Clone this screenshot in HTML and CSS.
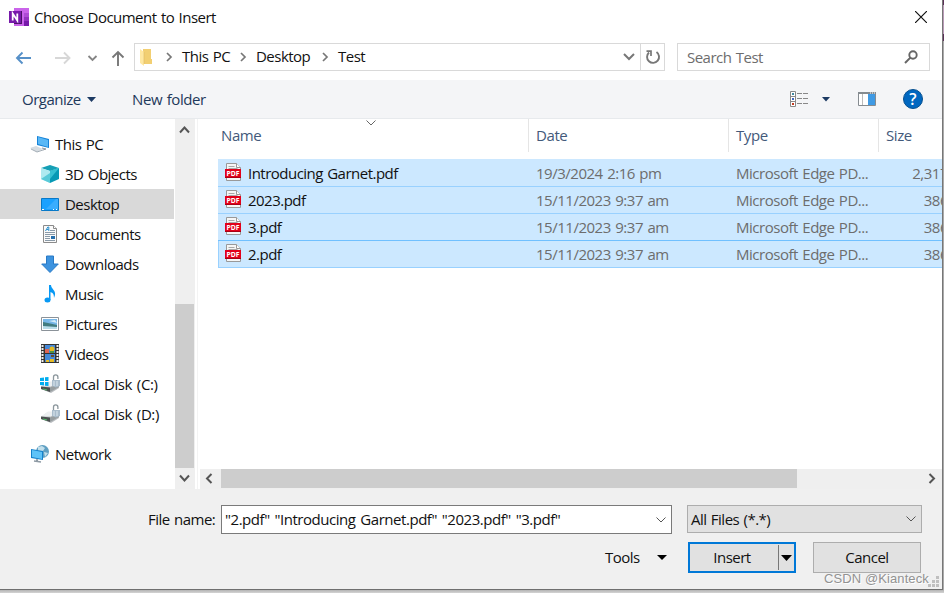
FILE: index.html
```html
<!DOCTYPE html>
<html lang="en">
<head>
<meta charset="utf-8">
<title>Choose Document to Insert</title>
<link rel="stylesheet" href="styles.css">
</head>
<body>
<svg class="defs" width="0" height="0">
  <defs>
    <g id="pdf">
      <path d="M1.5.5h10l4 4v13h-14z" fill="#f6f6f6" stroke="#999"/>
      <path d="M11.500.5v4h4" fill="#fff" stroke="#999"/>
      <path d="M3.500 3.500h6M3.500 5.500h9" stroke="#aaa"/>
      <path d="M0 6h16v9H0z" fill="#e2001a"/>
      <path d="M0 14h16v1H0z" fill="#a80014"/>
      <text x="8" y="13" text-anchor="middle" class="pdf-label">PDF</text>
    </g>
    <g id="drive">
      <path d="M1 13l7-5h9l2 3v3l-8 5-10-4z" fill="#b9bdc0"/>
      <path d="M1 12.500l7-5h10l-7 5z" fill="#edf0f1"/>
      <path d="M1 12.500l9 1v4.500l-9-3z" fill="#4b5050"/>
      <path d="M10 13.500l9-4v3.500l-9 5z" fill="#979d9f"/>
      <path d="M3 15l4 1" stroke="#54b96a" stroke-width="1.200"/>
      <path d="M13.500 6V3a2.200 2.200 0 0 1 4.400 0V5" fill="none" stroke="#8c979d" stroke-width="1.300"/>
      <path d="M12 6h8v6l-4 1.500-4-1.500z" fill="#a9bccb"/>
      <path d="M14 7v5M17 7v5" stroke="#dce8f0"/>
    </g>
  </defs>
</svg>
<div class="desktop">
<div class="dialog">
  <header class="title-bar">
    <svg width="20" height="18" viewBox="0 0 20 18">
      <path d="M5 0h15v18H5z" fill="#ca64ea"/><path d="M15 5h5v4h-5z" fill="#ae4bd5"/><path d="M15 9h5v4h-5z" fill="#9332bf"/><path d="M15 13h5v5h-5z" fill="#7719aa"/>
      <path d="M5 3h8v13H5z" fill="#4c1268"/><path d="M0 3h12v12H0z" fill="#7719aa"/>
      <path d="M3.700 12.500v-7l4.600 7v-7" fill="none" stroke="#fff" stroke-width="1.800"/>
    </svg>
    <h1 class="title">Choose Document to Insert</h1>
    <svg class="close" width="12" height="12" viewBox="0 0 12 12"><path d="M0 0l12 12M12 0L0 12" stroke="#111" stroke-width="1.200"/></svg>
  </header>

  <nav class="nav-bar">
    <svg class="nav-icons" width="118" height="28" viewBox="0 0 118 28" fill="none">
      <path d="M3 15h14M8.500 9.500L3 15l5.500 5.500" stroke="#5690c8" stroke-width="1.900"/>
      <path d="M41 15h14.500M50 9.500l5.500 5.500-5.500 5.500" stroke="#d7d7d7" stroke-width="1.900"/>
      <path d="M74.500 13l4 4 4-4" stroke="#858585" stroke-width="1.800"/>
      <path d="M104 23V9M98.500 14.500L104 9l5.500 5.500" stroke="#777" stroke-width="1.900"/>
    </svg>
    <div class="address">
      <svg class="folder" width="13" height="18" viewBox="0 0 13 18"><path d="M3 1h8v10h1v5H3z" fill="#f2cf72"/><path d="M0 1l4 3v14l-4-3z" fill="#ffe8a2"/><path d="M4 4v12" stroke="#dcb961" stroke-width=".6"/></svg>
      <svg class="crumb-arrow" width="7" height="10" viewBox="0 0 7 10"><path d="M1 1l4 4-4 4"/></svg>
      <span class="crumb crumb-pc">This PC</span>
      <svg class="crumb-arrow" width="7" height="10" viewBox="0 0 7 10"><path d="M1 1l4 4-4 4"/></svg>
      <span class="crumb crumb-desktop">Desktop</span>
      <svg class="crumb-arrow" width="7" height="10" viewBox="0 0 7 10"><path d="M1 1l4 4-4 4"/></svg>
      <span class="crumb">Test</span>
      <svg class="address-drop" width="12" height="8" viewBox="0 0 12 8"><path d="M1 1l5 5 5-5" fill="none" stroke="#777" stroke-width="2"/></svg>
      <span class="refresh"><svg width="16" height="16" viewBox="0 0 16 16"><path d="M11.500 3A6 6 0 1 1 4 3.500" fill="none" stroke="#777" stroke-width="1.900"/><path d="M1.500 2.200H6V7" fill="none" stroke="#777" stroke-width="1.700"/></svg></span>
    </div>
    <div class="search"><span>Search Test</span><svg width="14" height="14" viewBox="0 0 14 14"><circle cx="9" cy="5" r="3.700" fill="none" stroke="#666" stroke-width="1.900"/><path d="M6.400 7.600L1 13" stroke="#666" stroke-width="2"/></svg></div>
  </nav>

  <div class="toolbar">
    <span class="organize">Organize</span>
    <svg class="tri" width="9" height="5" viewBox="0 0 9 5"><path d="M0 0h9L4.500 5z" fill="#1c3a63"/></svg>
    <span class="new-folder">New folder</span>
    <svg class="view-icon" width="18" height="16" viewBox="0 0 18 16"><path d="M.5.5h5v15h-5zM.5 5.500h5M.5 10.500h5" fill="#fff" stroke="#888"/><path d="M2 2h2v2H2z" fill="#4088a0"/><path d="M2 7h2v2H2z" fill="#4268c0"/><path d="M2 12h2v2H2z" fill="#c33c21"/><path d="M7 2.500h5M13 2.500h5M7 7.500h5M13 7.500h5M7 12.500h5M13 12.500h5" stroke="#888"/></svg>
    <svg class="view-tri" width="8" height="5" viewBox="0 0 8 5"><path d="M0 0h8L4 4.500z" fill="#1c3a63"/></svg>
    <svg class="pane-icon" width="18" height="14" viewBox="0 0 18 14"><path d="M.5.5h17v13H.5z" fill="#fff" stroke="#858b90"/><path d="M0 0h18v2H0z" fill="#858b90"/><path d="M4.500 2v11" stroke="#bbb"/><path d="M10 2h7v11h-7z" fill="#3f9ae4"/><path d="M12 1h1M14 1h1M16 1h1" stroke="#fff"/></svg>
    <span class="help">?</span>
  </div>

  <main class="browser">
    <div class="tree">
      <div class="node root"><svg width="20" height="20" viewBox="0 0 20 20"><path d="M7 2l12 3v9L7 11z" fill="#1683d8"/><path d="M8 3l10 3v7L8 10z" fill="#59b8f6"/><path d="M0 14l6-2 7 3-6 3z" fill="#d6dce1"/><path d="M1 15l6 3 6-2" fill="none" stroke="#a3adb6"/><path d="M12 14l4 1-3 1" fill="none" stroke="#8e98a0"/></svg><span>This PC</span></div>
      <div class="node"><svg width="20" height="20" viewBox="0 0 20 20"><path d="M1 4l9-3 9 3-9 3z" fill="#159fb5"/><path d="M1 4l9 3v12l-9-4z" fill="#aeeaf0"/><path d="M10 7l9-3v11l-9 4z" fill="#0799b5"/><path d="M10 7l9-3-9 11z" fill="#35c0d2"/><path d="M1 15l9-6v10z" fill="#59cad8"/></svg><span>3D Objects</span></div>
      <div class="node selected"><svg width="20" height="20" viewBox="0 0 20 20"><path d="M1.500 4.500h17v12h-17z" fill="#1ba1ff" stroke="#0879c8"/><path d="M6 15L16 5h2v10z" fill="#39adff"/><path d="M2 15.500h2M13 15.500h1M16 15.500h1" stroke="#fff"/></svg><span>Desktop</span></div>
      <div class="node"><svg width="20" height="20" viewBox="0 0 20 20"><path d="M3.500 1.500h10l3 3v14h-13z" fill="#fafafa" stroke="#8b8b8b"/><path d="M13.500 1.500v3h3" fill="#fff" stroke="#8b8b8b"/><path d="M10 6.500h5M5 8.500h10M5 10.500h10M5 12.500h5M5 14.500h5M5 16.500h10" stroke="#8a9aa8"/><path d="M5.500 7l2.300-4h1v4M6.500 5.500h2" fill="none" stroke="#2c91ce"/><path d="M11 12h4v3h-4z" fill="#276fac"/></svg><span>Documents</span></div>
      <div class="node"><svg width="20" height="20" viewBox="0 0 20 20"><path d="M6.500 2h7v8h4.800L10 18.500 1.700 10h4.800z" fill="#3d93df" stroke="#2879c5"/></svg><span>Downloads</span></div>
      <div class="node"><svg width="20" height="20" viewBox="0 0 20 20"><ellipse cx="7.500" cy="16" rx="3" ry="2.500" fill="#0899f4"/><path d="M9 1h2c0 4 5 5 4 10l-1 3c0-4-1-5-3.500-6v8H9z" fill="#0899f4"/></svg><span>Music</span></div>
      <div class="node"><svg width="20" height="20" viewBox="0 0 20 20"><path d="M1.500 3.500h17v13h-17z" fill="#fff" stroke="#8b9299"/><path d="M3 5h14v10H3z" fill="#77b7e8"/><path d="M3 8l5 1 9 2v4H3z" fill="#427c80"/><path d="M9 7l6-1 2 3z" fill="#d5edfa"/><path d="M3 12l14 1v2H3z" fill="#b8dce9"/></svg><span>Pictures</span></div>
      <div class="node"><svg width="20" height="20" viewBox="0 0 20 20"><path d="M1 0h18v19H1z" fill="#343434"/><path d="M5 1h10v8H5zM5 10h10v8H5z" fill="#4489d9"/><path d="M2.500 1v17M17.500 1v17" stroke="#eee" stroke-width="2" stroke-dasharray="2 1"/><circle cx="12" cy="5" r="2.500" fill="#e5ba21"/><path d="M5 5h4v4H5z" fill="#df6655"/><path d="M10 7h4v2h-4z" fill="#4d9243"/><path d="M6 16h3v2H6zM10 15h4v3h-4z" fill="#e7bb26"/><path d="M11 11h3v2h-3z" fill="#654d2b"/></svg><span>Videos</span></div>
      <div class="node"><svg width="20" height="20" viewBox="0 0 20 20"><use href="#drive"/><path d="M0 4l4-.5V7H0zM5 3.300L8.500 3v4H5zM0 8h4v3.500L0 11zM5 8h3.500v4L5 11.700z" fill="#00adef"/></svg><span class="disk">Local Disk (C:)</span></div>
      <div class="node"><svg width="20" height="20" viewBox="0 0 20 20"><use href="#drive"/></svg><span class="disk">Local Disk (D:)</span></div>
      <div class="node root network"><svg width="20" height="20" viewBox="0 0 20 20"><circle cx="12.500" cy="7.500" r="6.500" fill="#5f9fc2"/><path d="M8 3l4-1 3 2-2 3H8zM14 8l4 1-3 4z" fill="#c2dfeb"/><path d="M1 5l12 2v9L1 14z" fill="#1581cb"/><path d="M2 6l10 2v7L2 13z" fill="#5ec3f8"/><path d="M7 15v2M4 17l7 1" stroke="#8e9aa4" stroke-width="1.500"/></svg><span>Network</span></div>
    </div>
    <div class="v-scroll">
      <svg width="11" height="8" viewBox="0 0 11 8"><path d="M1 6.500l4.500-5 4.500 5"/></svg>
      <div class="v-thumb"></div>
      <svg width="11" height="8" viewBox="0 0 11 8"><path d="M1 1.500l4.500 5 4.500-5"/></svg>
    </div>
    <div class="files">
      <div class="columns">
        <div class="column">Name<svg class="sort" width="10" height="6" viewBox="0 0 10 6"><path d="M.5.5L5 5 9.500.5" fill="none" stroke="#666"/></svg></div>
        <div class="column">Date</div><div class="column">Type</div><div class="column">Size</div>
      </div>
      <div class="rows">
        <div class="row"><div class="name"><svg width="16" height="18"><use href="#pdf"/></svg><span>Introducing Garnet.pdf</span></div><span>19/3/2024 2:16 pm</span><span>Microsoft Edge PD...</span><span class="size">2,317</span></div>
        <div class="row"><div class="name"><svg width="16" height="18"><use href="#pdf"/></svg><span>2023.pdf</span></div><span>15/11/2023 9:37 am</span><span>Microsoft Edge PD...</span><span class="size">386</span></div>
        <div class="row"><div class="name"><svg width="16" height="18"><use href="#pdf"/></svg><span>3.pdf</span></div><span>15/11/2023 9:37 am</span><span>Microsoft Edge PD...</span><span class="size">386</span></div>
        <div class="row focused"><div class="name"><svg width="16" height="18"><use href="#pdf"/></svg><span>2.pdf</span></div><span>15/11/2023 9:37 am</span><span>Microsoft Edge PD...</span><span class="size">386</span></div>
      </div>
      <div class="h-scroll">
        <svg width="8" height="11" viewBox="0 0 8 11"><path d="M6.500 1L2 5.500 6.500 10"/></svg>
        <div class="h-thumb"></div>
        <svg width="8" height="11" viewBox="0 0 8 11"><path d="M1.500 1L6 5.500 1.500 10"/></svg>
      </div>
    </div>
  </main>

  <footer class="footer">
    <div class="file-line">
      <label class="file-label">File name:</label>
      <div class="file-input"><span>"2.pdf" "Introducing Garnet.pdf" "2023.pdf" "3.pdf"</span><svg width="10" height="6" viewBox="0 0 10 6"><path d="M.5.5L5 5 9.500.5" fill="none" stroke="#555"/></svg></div>
      <div class="filter"><span>All Files (*.*)</span><svg width="10" height="6" viewBox="0 0 10 6"><path d="M.5.5L5 5 9.500.5" fill="none" stroke="#555"/></svg></div>
    </div>
    <div class="actions">
      <span class="tools">Tools</span>
      <svg class="tools-tri" width="10" height="5" viewBox="0 0 10 5"><path d="M0 0h10L5 5z"/></svg>
      <div class="insert"><span>Insert</span><div class="split"><svg width="11" height="6" viewBox="0 0 11 6"><path d="M0 0h11L5.500 6z"/></svg></div></div>
      <div class="cancel">Cancel</div>
    </div>
  </footer>
  <svg class="grip" width="11" height="11" viewBox="0 0 11 11"><path d="M8 0h3v3H8zM4 4h3v3H4zM8 4h3v3H8zM0 8h3v3H0zM4 8h3v3H4zM8 8h3v3H8z" fill="#bfbfbf"/></svg>
  <span class="watermark">CSDN @Kianteck</span>
</div>
</div>
</body>
</html>
```
FILE: styles.css
```css
* { box-sizing: border-box; }
body { margin: 0; width: 944px; height: 593px; overflow: hidden; font-family: "Open Sans", "Noto Sans", sans-serif; font-size: 15px; letter-spacing: -0.52px; word-spacing: 1px; line-height: 20px; color: #111; }
svg { display: block; flex: none; }
span, label { white-space: pre; }
.defs { position: absolute; }
.desktop { width: 944px; height: 593px; background: linear-gradient(#a9a9a9, #d4d4d4 4px) 0 589px / 944px 4px no-repeat, linear-gradient(#5b3158 0 5px, #b999b7 5px 34px, #5b3158 34px 41px, #aaa 41px); }
.dialog { position: relative; display: flex; flex-direction: column; width: 943px; height: 590px; background: #fff; border-right: 1px solid #777; border-bottom: 1px solid #6f6f6f; }
.title-bar { display: flex; align-items: center; height: 34px; padding-left: 9px; flex: none; }
.title { margin: -1px 0 0 5px; font-size: 15px; font-weight: 400; line-height: 20px; }
.title-bar svg:first-child { margin-top: -1px; }
.close { margin: 0 15px 0 auto; }
.nav-bar { display: flex; height: 46px; padding: 9px 0 9px 14px; flex: none; }
.nav-icons { width: 118px; margin-right: 2px; }
.address { display: flex; align-items: center; width: 531px; height: 28px; border: 1px solid #d9d9d9; padding-left: 5px; }
.folder { margin-right: 13px; }
.crumb-arrow { margin-right: 9px; }
.crumb-arrow path { fill: none; stroke: #777; stroke-width: 1.7; }
.crumb { margin-top: -3px; }
.crumb-pc { width: 58px; }
.crumb-desktop { width: 66px; }
.address-drop { margin-left: auto; margin-right: 5px; }
.refresh { display: flex; align-items: center; justify-content: center; width: 24px; height: 26px; border-left: 1px solid #d9d9d9; }
.search { display: flex; align-items: center; justify-content: space-between; margin-left: 12px; width: 253px; height: 28px; padding: 0 11px 0 9px; border: 1px solid #d9d9d9; color: #6d6d6d; }
.search span { margin-top: -1px; }
.toolbar { display: flex; align-items: center; height: 39px; flex: none; padding: 0 19px 0 22px; background: #f4f5f7; border-bottom: 1px solid #e7eaed; color: #1e395b; }
.organize { width: 65px; margin-top: -1px; }
.new-folder { margin: -1px 0 0 36px; letter-spacing: -0.4px; }
.view-icon { margin-left: auto; margin-right: 14px; }
.view-tri { margin-right: 28px; }
.pane-icon { margin-right: 27px; }
.help { display: grid; place-items: center; width: 20px; height: 20px; border-radius: 50%; background: #0067c0; border: 1px solid #07508f; color: #fff; font-size: 16px; font-weight: 600; letter-spacing: 0; line-height: 18px; }
.browser { display: flex; height: 370px; flex: none; }
.tree { width: 174px; padding-top: 10px; }
.node { display: flex; align-items: center; height: 30px; padding-left: 40px; gap: 5px; }
.node span { margin-top: -1px; }
.node .disk { letter-spacing: -0.4px; word-spacing: 1.3px; }
.root { padding-left: 30px; }
.selected { background: #d9d9d9; }
.network { margin-top: 10px; }
.v-scroll { display: flex; flex-direction: column; align-items: center; justify-content: space-between; width: 20px; margin-left: 1px; padding: 7px 1px 7px 0; background: #efefef; }
.v-scroll path, .h-scroll path { fill: none; stroke: #555; stroke-width: 2; }
.v-thumb { width: 19px; height: 164px; margin: auto 0 6px; background: #cdcdcd; }
.files { display: flex; flex-direction: column; width: 745px; margin-left: 2px; border-left: 1px solid #f3f3f3; overflow: hidden; }
.columns { display: grid; grid-template-columns: 331px 200px 150px 1fr; height: 33px; color: #43597a; }
.column { position: relative; padding: 6px 0 0 7px; border-right: 1px solid #e5e5e5; letter-spacing: -0.4px; }
.column:first-child { padding-left: 23px; }
.column:last-child { border: 0; }
.sort { position: absolute; left: 168px; top: 1px; }
.rows { margin: 7px 0 0 20px; border-top: 1px solid #cce8ff; }
.row { display: grid; grid-template-columns: 318px 200px 152px 80px; align-items: center; width: 750px; height: 27px; background: #cce8ff; border-bottom: 1px solid #99d1ff; color: #6d6d6d; }
.row:nth-child(3) { border-bottom-color: #70c0ff; }
.row > span { margin-top: -1px; letter-spacing: -0.48px; }
.name span { margin-top: -1px; }
.focused { border-left: 1px solid #99d1ff; }
.focused .name { margin-left: -1px; }
.focused > span { position: relative; left: -1px; }
.name { display: flex; align-items: center; gap: 7px; padding-left: 7px; color: #111; }
.name svg { margin-top: -2px; }
.row .size { width: 60px; text-align: right; }
.pdf-label { fill: #fff; font: bold 6.8px "Open Sans", sans-serif; letter-spacing: 0; }
.h-scroll { display: flex; align-items: center; height: 20px; margin: auto 0 0 2px; padding: 0 6px 1px 5px; background: #efefef; }
.h-thumb { width: 576px; height: 19px; margin: 0 auto 0 8px; background: #cdcdcd; }
.footer { flex: 1; background: #f0f0f0; }
.file-line { display: flex; align-items: center; height: 29px; margin-top: 16px; padding-left: 148px; }
.file-label { width: 73px; margin-top: -2px; }
.file-input { display: flex; align-items: center; justify-content: space-between; width: 451px; height: 29px; padding: 0 5px 0 3px; border: 1px solid #7a7a7a; background: #fff; }
.file-input span { margin-top: -2px; letter-spacing: -0.46px; word-spacing: 1.4px; }
.filter { display: flex; align-items: center; justify-content: space-between; width: 235px; height: 28px; margin: 0 0 1px 15px; padding: 0 5px 0 3px; border: 1px solid #adadad; background: #e1e1e1; }
.filter span { margin-top: -1px; }
.actions { display: flex; align-items: center; height: 31px; margin-top: 8px; padding-left: 605px; }
.tools { width: 52px; margin-top: -2px; }
.tools-tri { margin-right: 21px; }
.insert { display: flex; align-items: center; width: 108px; height: 31px; border: 2px solid #0078d7; background: #e1e1e1; }
.insert > span { width: 88px; margin-top: -2px; padding-right: 4px; text-align: center; }
.split { display: flex; align-items: center; height: 25px; padding-left: 2px; border-left: 1px solid #777; }
.cancel { width: 108px; height: 31px; margin-left: 17px; border: 1px solid #adadad; background: #e1e1e1; text-align: center; line-height: 28px; }
.grip { position: absolute; right: 3px; bottom: 2px; }
.watermark { position: absolute; left: 824px; top: 569px; font: 13px/20px "Liberation Sans", sans-serif; letter-spacing: 0.1px; word-spacing: 0; color: #929292; text-shadow: 1px 1px #fff; }
```
